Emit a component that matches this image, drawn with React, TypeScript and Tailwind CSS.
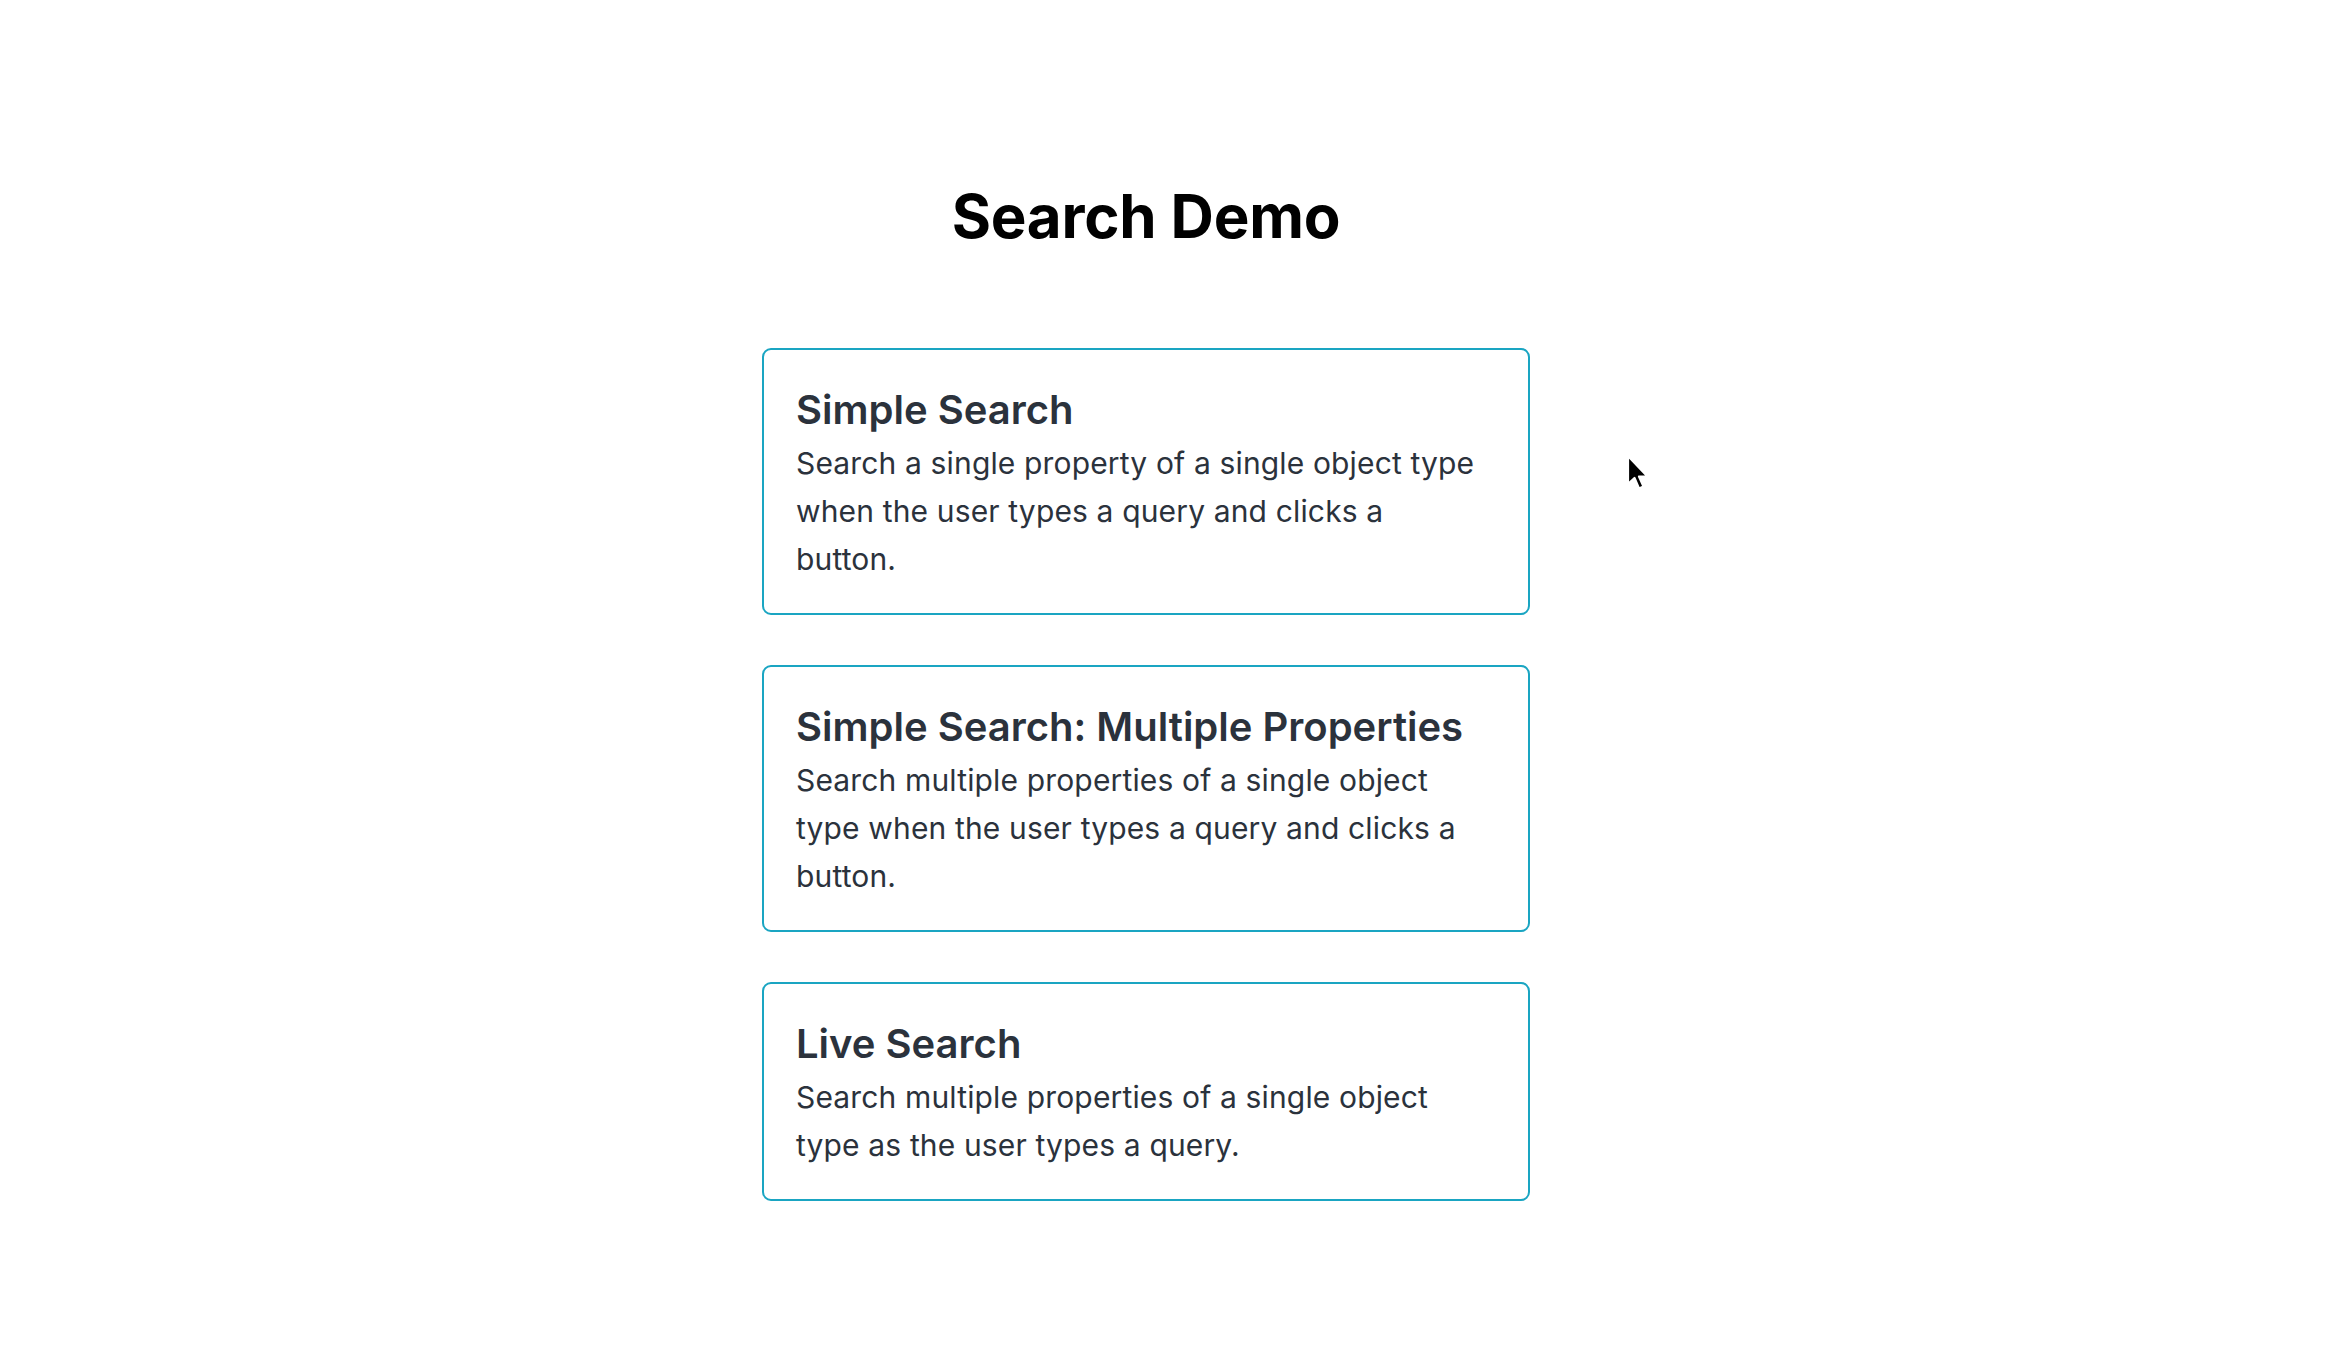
import React from "react";

const cards = [
  {
    title: "Simple Search",
    body: "Search a single property of a single object type when the user types a query and clicks a button.",
  },
  {
    title: "Simple Search: Multiple Properties",
    body: "Search multiple properties of a single object type when the user types a query and clicks a button.",
  },
  {
    title: "Live Search",
    body: "Search multiple properties of a single object type as the user types a query.",
  },
];

export default function App() {
  return (
    <div
      className="relative min-h-[1372px] w-full bg-white"
      style={{ fontFamily: "Inter, 'Noto Sans', sans-serif" }}
    >
      <div className="flex flex-col items-center pr-[38px] pt-[180px]">
        <h1 className="text-[60px] font-bold leading-[72px] text-black tracking-[-0.2px]">
          Search Demo
        </h1>
        <div className="mt-[96px] flex w-[768px] flex-col gap-[50px]">
          {cards.map((c) => (
            <div
              key={c.title}
              className="rounded-[9px] border-2 border-[#1aa5c2] pl-[32px] pr-[45px] pt-[36px] pb-[30px]"
            >
              <h2 className="text-[40px] font-semibold leading-[48px] text-[#2b323c] mb-[5px]">
                {c.title}
              </h2>
              <p className="text-[30px] leading-[48px] text-[#2b323c] tracking-[0.15px]">
                {c.body}
              </p>
            </div>
          ))}
        </div>
      </div>
      <svg
        className="absolute left-[1625px] top-[454px]"
        width="26"
        height="38"
        viewBox="0 0 26 38"
      >
        <path
          d="M3 2 L3 30 L9.5 24 L14 34.5 L18.5 32.5 L14 22.5 L22.5 22.5 Z"
          fill="#000"
          stroke="#fff"
          strokeWidth="2.2"
          strokeLinejoin="round"
        />
      </svg>
    </div>
  );
}
